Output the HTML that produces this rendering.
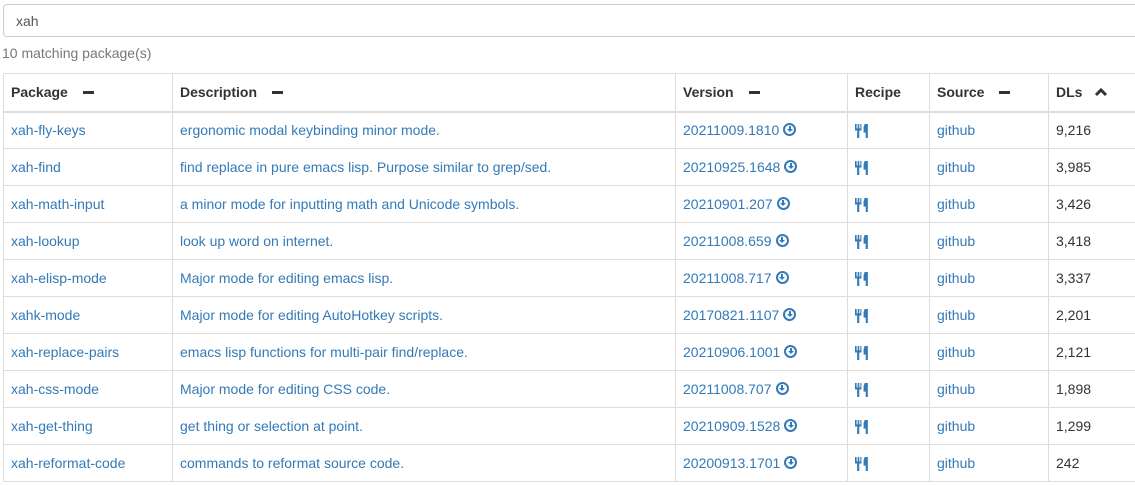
<!DOCTYPE html>
<html><head><style>
body{margin:0;font-family:"Liberation Sans",sans-serif;font-size:14px;color:#333;background:#fff;width:1135px;height:485px;overflow:hidden}
.inp{position:absolute;left:3px;top:4px;width:1140px;height:33px;border:1px solid #ccc;border-radius:4px;box-sizing:border-box;padding:0 12px;line-height:32px;color:#555}
.cnt{position:absolute;left:2px;top:45px;color:#777}
table{position:absolute;left:3px;top:73px;border-collapse:collapse;table-layout:fixed;width:1145px}
td,th{border:1px solid #ddd;height:36px;padding:0 7px;text-align:left;white-space:nowrap;box-sizing:border-box}
th{border-bottom:2px solid #ddd;height:38px;font-weight:bold}
tr.r td{height:37px}
a{color:#337ab7;text-decoration:none}
.m{display:inline-block;width:11px;height:3px;background:#333;vertical-align:middle;margin-left:15px;position:relative;top:-1px}
.dl{display:inline-block;width:13px;height:13px;border:2px solid #337ab7;border-radius:50%;box-sizing:border-box;position:relative;vertical-align:-1px;margin-left:4px}
.dl:before{content:"";position:absolute;left:3.5px;top:1px;width:2px;height:5px;background:#337ab7}
.dl:after{content:"";position:absolute;left:1.5px;top:4px;border:3px solid transparent;border-top:3px solid #337ab7;border-bottom:0}
svg.ic{vertical-align:middle}
</style></head><body>
<div class="inp">xah</div>
<div class="cnt">10 matching package(s)</div>
<table>
<colgroup><col style="width:169px"><col style="width:503px"><col style="width:172px"><col style="width:82px"><col style="width:119px"><col style="width:100px"></colgroup>
<tr><th>Package<span class="m"></span></th><th>Description<span class="m"></span></th><th>Version<span class="m"></span></th><th>Recipe</th><th>Source<span class="m"></span></th><th>DLs <svg width="14" height="10" viewBox="0 0 14 10" style="margin-left:8px"><path d="M2 8 L7 3 L12 8" stroke="#333" stroke-width="3" fill="none"/></svg></th></tr>
<tbody id="b"></tbody>
</table>
<script>
var d=[["xah-fly-keys","ergonomic modal keybinding minor mode.","20211009.1810","9,216"],
["xah-find","find replace in pure emacs lisp. Purpose similar to grep/sed.","20210925.1648","3,985"],
["xah-math-input","a minor mode for inputting math and Unicode symbols.","20210901.207","3,426"],
["xah-lookup","look up word on internet.","20211008.659","3,418"],
["xah-elisp-mode","Major mode for editing emacs lisp.","20211008.717","3,337"],
["xahk-mode","Major mode for editing AutoHotkey scripts.","20170821.1107","2,201"],
["xah-replace-pairs","emacs lisp functions for multi-pair find/replace.","20210906.1001","2,121"],
["xah-css-mode","Major mode for editing CSS code.","20211008.707","1,898"],
["xah-get-thing","get thing or selection at point.","20210909.1528","1,299"],
["xah-reformat-code","commands to reformat source code.","20200913.1701","242"]];
var ic='<svg class="ic" width="15" height="14" viewBox="0 0 14 13"><path d="M0 0h1.5v4h1V0h1.5v4h1V0H6v6H4v7H2V6H0z M9 0h3v13h-2V8H8V3z" fill="#337ab7"/></svg>';
var h="";d.forEach(function(r){h+='<tr class="r"><td><a>'+r[0]+'</a></td><td><a>'+r[1]+'</a></td><td><a>'+r[2]+'</a><span class="dl"></span></td><td>'+ic+'</td><td><a>github</a></td><td>'+r[3]+'</td></tr>'});
document.getElementById("b").innerHTML=h;
</script>
</body></html>
